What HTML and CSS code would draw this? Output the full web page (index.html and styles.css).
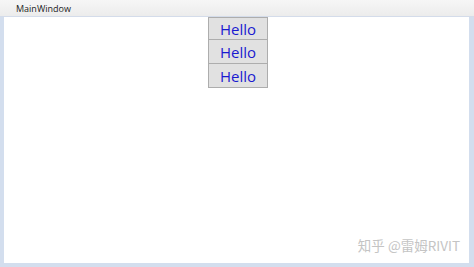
FILE: index.html
```html
<!DOCTYPE html>
<html lang="en">
<head>
  <meta charset="UTF-8">
  <title>MainWindow</title>
  <link rel="stylesheet" href="styles.css">
</head>
<body>
  <div class="window">
    <div class="titlebar">MainWindow</div>
    <div class="client">
      <div class="stack">
        <button class="hello">Hello</button>
        <button class="hello">Hello</button>
        <button class="hello">Hello</button>
      </div>
      <div class="mark">知乎 @雷姆RIVIT</div>
    </div>
  </div>
</body>
</html>
```

FILE: styles.css
```css
body {
  margin: 0;
  width: 474px;
  height: 267px;
  overflow: hidden;
  font-family: "Open Sans", "Noto Sans", "Noto Sans CJK SC", sans-serif;
}
.window {
  box-sizing: border-box;
  width: 474px;
  height: 267px;
  background: #d3deee;
  padding: 0 5px 4px 4px;
  display: flex;
  flex-direction: column;
}
.titlebar {
  height: 16px;
  margin: 0 -5px 0 -4px;
  padding-left: 16px;
  background: linear-gradient(#f6f6f6, #ececec);
  border-bottom: 1px solid #d4dcea;
  font-size: 9px;
  line-height: 17px;
  color: #222;
}
.client {
  flex: 1;
  background: #ffffff;
  position: relative;
  display: flex;
  justify-content: center;
}
.stack {
  display: flex;
  flex-direction: column;
  margin-left: 3px;
}
.hello {
  width: 60px;
  height: 24px;
  margin: 0;
  padding: 0;
  background: #e1e1e1;
  border: 1px solid #adadad;
  border-top-width: 0;
  color: #1a1ad0;
  font-family: "Open Sans", "Noto Sans", sans-serif;
  font-size: 15px;
}
.hello:first-child {
  border-top-width: 1px;
  height: 23px;
}
.mark {
  position: absolute;
  right: 9px;
  bottom: 8px;
  font-size: 13.5px;
  color: #c4c4c4;
  font-family: "Noto Sans CJK SC", sans-serif;
}
```
